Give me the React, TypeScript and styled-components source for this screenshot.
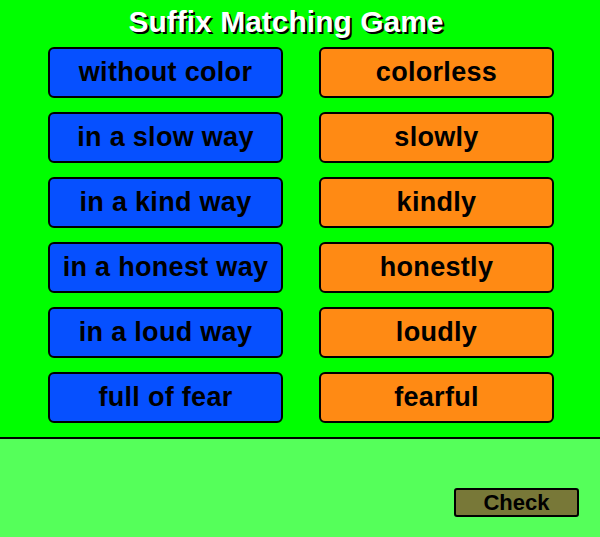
import React from 'react'
import styled, { createGlobalStyle } from 'styled-components'

const GlobalStyle = createGlobalStyle`
  html, body {
    margin: 0;
    padding: 0;
  }
  body {
    font-family: 'Liberation Sans', Arial, sans-serif;
  }
`

const Page = styled.div`
  width: 600px;
  height: 537px;
  display: flex;
  flex-direction: column;
  overflow: hidden;
`

const Board = styled.div`
  height: 437px;
  background: #00ff00;
  border-bottom: 2px solid #000000;
  display: flex;
  flex-direction: column;
  align-items: center;
`

const Title = styled.h1`
  margin: 6px 28px 0 0;
  height: 41px;
  font-size: 30px;
  font-weight: bold;
  color: #ffffff;
  text-shadow: 2px 2px 0 #000000;
  line-height: 32px;
`

const Grid = styled.div`
  display: grid;
  grid-template-columns: 235px 235px;
  column-gap: 36px;
  row-gap: 14px;
  margin-left: 2px;
`

const Card = styled.div<{ $side: 'left' | 'right' }>`
  height: 47px;
  box-sizing: content-box;
  border: 2px solid #000000;
  border-radius: 6px;
  background: ${({ $side }) => ($side === 'left' ? '#0650ff' : '#ff8a14')};
  display: flex;
  align-items: center;
  justify-content: center;
  font-size: 27px;
  letter-spacing: 0.3px;
  font-weight: bold;
  color: #000000;
  cursor: pointer;
  user-select: none;
`

const Footer = styled.div`
  flex: 1;
  background: #55ff5a;
  display: flex;
  justify-content: flex-end;
  align-items: flex-end;
  padding: 0 21px 20px 0;
`

const CheckButton = styled.button`
  width: 125px;
  height: 29px;
  background: #787838;
  border: 2px solid #000000;
  border-radius: 3px;
  font-family: 'Liberation Sans', Arial, sans-serif;
  font-size: 22px;
  font-weight: bold;
  color: #000000;
  padding: 0;
  line-height: 25px;
  cursor: pointer;
`

const pairs = [
  ['without color', 'colorless'],
  ['in a slow way', 'slowly'],
  ['in a kind way', 'kindly'],
  ['in a honest way', 'honestly'],
  ['in a loud way', 'loudly'],
  ['full of fear', 'fearful'],
]

const App = () => {
  return (
    <Page>
      <GlobalStyle />
      <Board>
        <Title>Suffix Matching Game</Title>
        <Grid>
          {pairs.map(([meaning, word]) => (
            <React.Fragment key={word}>
              <Card $side="left">{meaning}</Card>
              <Card $side="right">{word}</Card>
            </React.Fragment>
          ))}
        </Grid>
      </Board>
      <Footer>
        <CheckButton>Check</CheckButton>
      </Footer>
    </Page>
  )
}

export default App
